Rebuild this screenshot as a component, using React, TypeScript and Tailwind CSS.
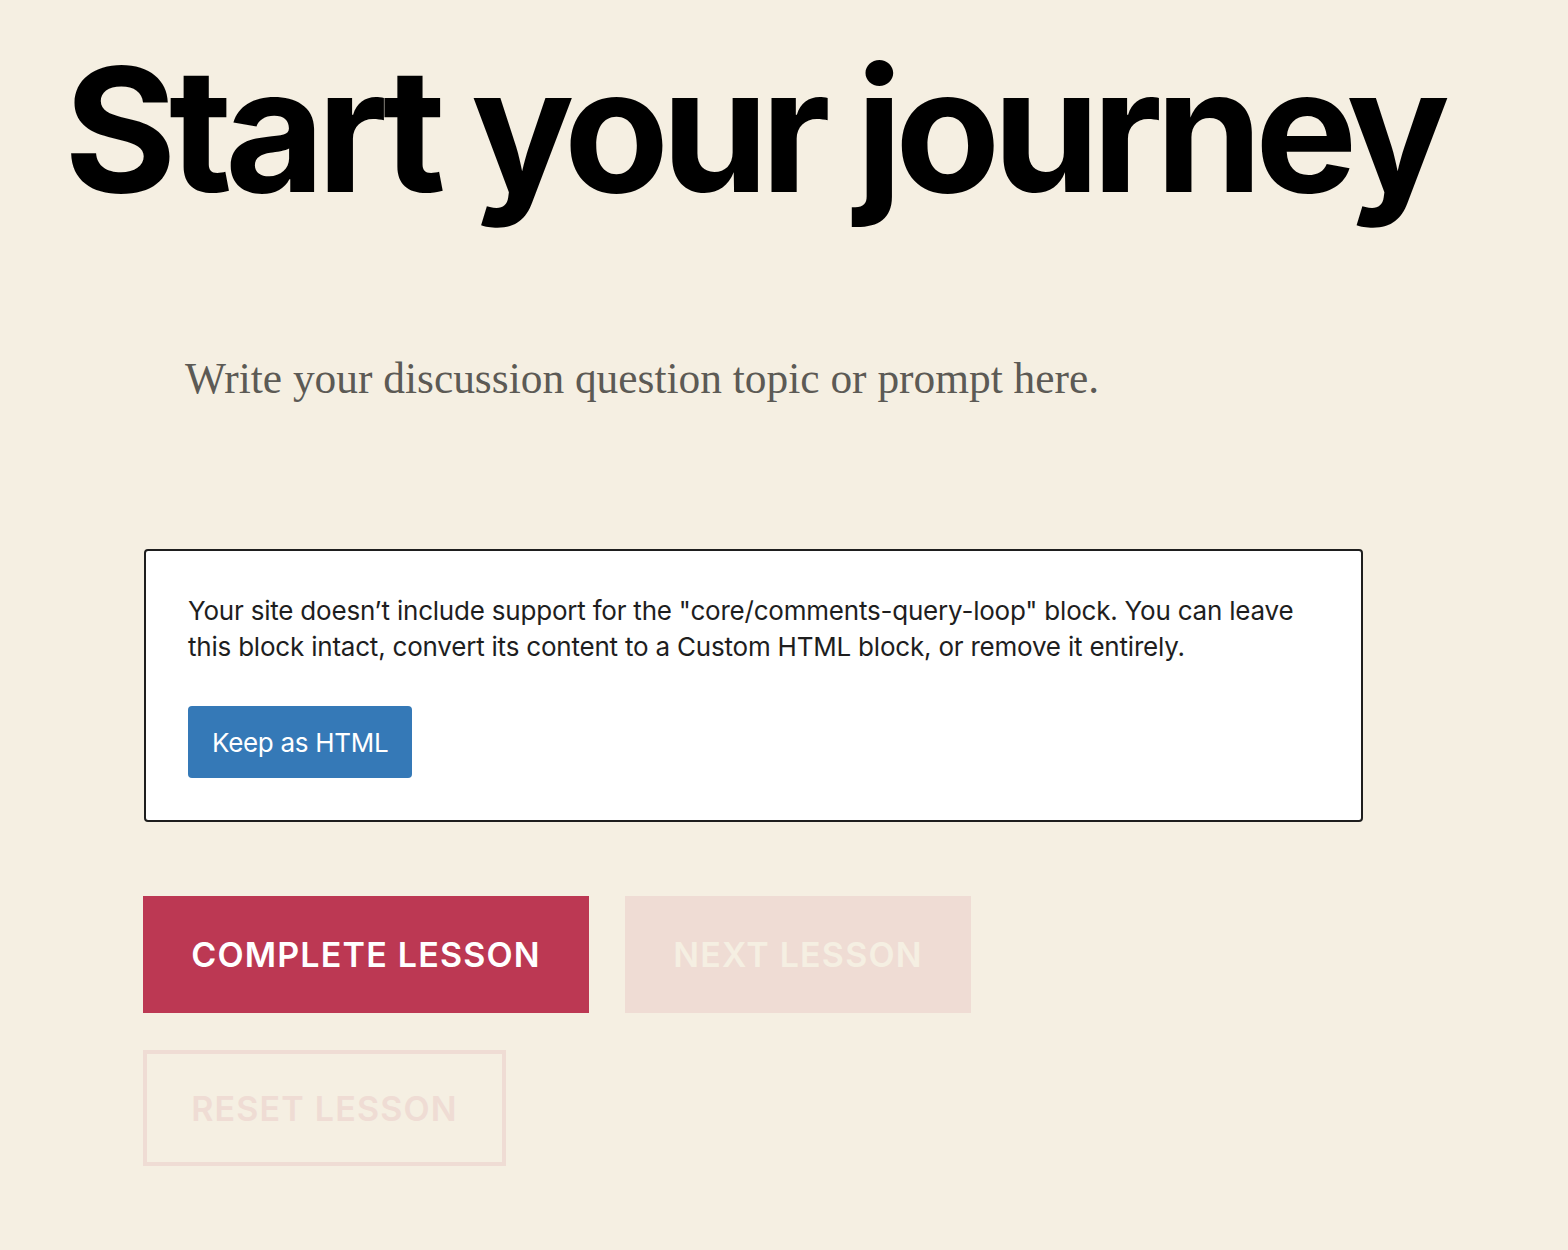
export default function App() {
  return (
    <div className="min-h-[1250px] w-full bg-[#f5efe2] px-[64px] pt-[43px] font-['Inter',sans-serif]">
      <h1 className="text-[172px] leading-none font-bold tracking-[-0.045em] text-black whitespace-nowrap">
        Start your journey
      </h1>

      <p className="mt-[137px] pl-[121px] font-['Liberation_Serif',serif] text-[43.4px] leading-[1.2] text-[#5c5a55]">
        Write your discussion question topic or prompt here.
      </p>

      <div className="ml-[80px] mt-[145px] w-[1219px] rounded-[4px] border-2 border-[#1e1e1e] bg-white p-[42px]">
        <p className="text-[26px] leading-[36px] tracking-[-0.21px] text-[#1e1e1e]">
          Your site doesn’t include support for the "core/comments-query-loop" block. You can leave this block intact, convert its content to a Custom HTML block, or remove it entirely.
        </p>
        <button className="mt-[41px] h-[72px] rounded-[4px] bg-[#3579b7] px-[24px] text-[26px] tracking-[-0.3px] text-white">
          Keep as HTML
        </button>
      </div>

      <div className="ml-[79px] mt-[74px] flex gap-[36px]">
        <button className="h-[117px] w-[446px] bg-[#bc3853] text-[34px] font-semibold uppercase tracking-[0.035em] text-white">
          Complete Lesson
        </button>
        <button className="h-[117px] w-[346px] bg-[#efdcd4] text-[34px] font-semibold uppercase tracking-[0.035em] text-[#f5efe2]">
          Next Lesson
        </button>
      </div>
      <div className="ml-[79px] mt-[37px]">
        <button className="h-[116px] w-[363px] border-4 border-[#efdcd4] text-[34px] font-semibold uppercase tracking-[0.035em] text-[#efdcd4]">
          Reset Lesson
        </button>
      </div>
    </div>
  )
}
